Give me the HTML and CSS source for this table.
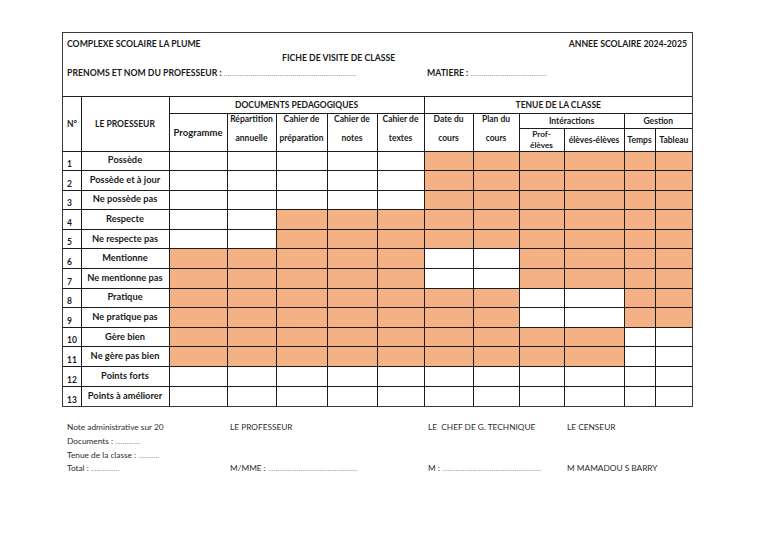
FILE: index.html
```html
<!DOCTYPE html>
<html lang="fr">
<head>
<meta charset="utf-8">
<title>Fiche de visite de classe</title>
<link rel="stylesheet" href="styles.css">
</head>
<body>
<div class="sheet">
  <div class="head">
    <div class="head-row">
      <span>COMPLEXE SCOLAIRE LA PLUME</span>
      <span>ANNEE SCOLAIRE 2024-2025</span>
    </div>
    <div class="title">FICHE DE VISITE DE CLASSE</div>
    <div class="head-row fields">
      <span class="prof">PRENOMS ET NOM DU PROFESSEUR : <span class="dots">.....................................................................</span></span>
      <span class="mat">MATIERE : <span class="dots">........................................</span></span>
    </div>
  </div>
  <table class="grid">
    <colgroup>
      <col class="c-n"><col class="c-lbl"><col class="c-prog"><col class="c-rep"><col class="c-prep"><col class="c-notes"><col class="c-txt"><col class="c-date"><col class="c-plan"><col class="c-pe"><col class="c-ee"><col class="c-tps"><col class="c-tab">
    </colgroup>
    <thead>
      <tr class="h-a">
        <th rowspan="3" class="n-head">N°</th>
        <th rowspan="3">LE PROESSEUR</th>
        <th colspan="5">DOCUMENTS PEDAGOGIQUES</th>
        <th colspan="6">TENUE DE LA CLASSE</th>
      </tr>
      <tr class="h-b">
        <th rowspan="2" class="big">Programme</th>
        <th rowspan="2" class="two"><span class="stack">Répartition<br>annuelle</span></th>
        <th rowspan="2" class="two"><span class="stack">Cahier de<br>préparation</span></th>
        <th rowspan="2" class="two"><span class="stack">Cahier de<br>notes</span></th>
        <th rowspan="2" class="two"><span class="stack">Cahier de<br>textes</span></th>
        <th rowspan="2" class="two"><span class="stack">Date du<br>cours</span></th>
        <th rowspan="2" class="two"><span class="stack">Plan du<br>cours</span></th>
        <th colspan="2">Intéractions</th>
        <th colspan="2">Gestion</th>
      </tr>
      <tr class="h-c">
        <th class="tight">Prof-<br>élèves</th>
        <th>élèves-élèves</th>
        <th>Temps</th>
        <th>Tableau</th>
      </tr>
    </thead>
    <tbody>
      <tr><td class="num">1</td><td class="lbl">Possède</td><td></td><td></td><td></td><td></td><td></td><td class="o"></td><td class="o"></td><td class="o"></td><td class="o"></td><td class="o"></td><td class="o"></td></tr>
      <tr><td class="num">2</td><td class="lbl">Possède et à jour</td><td></td><td></td><td></td><td></td><td></td><td class="o"></td><td class="o"></td><td class="o"></td><td class="o"></td><td class="o"></td><td class="o"></td></tr>
      <tr><td class="num">3</td><td class="lbl">Ne possède pas</td><td></td><td></td><td></td><td></td><td></td><td class="o"></td><td class="o"></td><td class="o"></td><td class="o"></td><td class="o"></td><td class="o"></td></tr>
      <tr><td class="num">4</td><td class="lbl">Respecte</td><td></td><td></td><td class="o"></td><td class="o"></td><td class="o"></td><td class="o"></td><td class="o"></td><td class="o"></td><td class="o"></td><td class="o"></td><td class="o"></td></tr>
      <tr><td class="num">5</td><td class="lbl">Ne respecte pas</td><td></td><td></td><td class="o"></td><td class="o"></td><td class="o"></td><td class="o"></td><td class="o"></td><td class="o"></td><td class="o"></td><td class="o"></td><td class="o"></td></tr>
      <tr><td class="num">6</td><td class="lbl">Mentionne</td><td class="o"></td><td class="o"></td><td class="o"></td><td class="o"></td><td class="o"></td><td></td><td></td><td class="o"></td><td class="o"></td><td class="o"></td><td class="o"></td></tr>
      <tr><td class="num">7</td><td class="lbl">Ne mentionne pas</td><td class="o"></td><td class="o"></td><td class="o"></td><td class="o"></td><td class="o"></td><td></td><td></td><td class="o"></td><td class="o"></td><td class="o"></td><td class="o"></td></tr>
      <tr><td class="num">8</td><td class="lbl">Pratique</td><td class="o"></td><td class="o"></td><td class="o"></td><td class="o"></td><td class="o"></td><td class="o"></td><td class="o"></td><td></td><td></td><td class="o"></td><td class="o"></td></tr>
      <tr><td class="num">9</td><td class="lbl">Ne pratique pas</td><td class="o"></td><td class="o"></td><td class="o"></td><td class="o"></td><td class="o"></td><td class="o"></td><td class="o"></td><td></td><td></td><td class="o"></td><td class="o"></td></tr>
      <tr><td class="num">10</td><td class="lbl">Gère bien</td><td class="o"></td><td class="o"></td><td class="o"></td><td class="o"></td><td class="o"></td><td class="o"></td><td class="o"></td><td class="o"></td><td class="o"></td><td></td><td></td></tr>
      <tr><td class="num">11</td><td class="lbl">Ne gère pas bien</td><td class="o"></td><td class="o"></td><td class="o"></td><td class="o"></td><td class="o"></td><td class="o"></td><td class="o"></td><td class="o"></td><td class="o"></td><td></td><td></td></tr>
      <tr><td class="num">12</td><td class="lbl">Points forts</td><td></td><td></td><td></td><td></td><td></td><td></td><td></td><td></td><td></td><td></td><td></td></tr>
      <tr><td class="num">13</td><td class="lbl">Points à améliorer</td><td></td><td></td><td></td><td></td><td></td><td></td><td></td><td></td><td></td><td></td><td></td></tr>
    </tbody>
  </table>
</div>
<div class="foot">
  <span class="f1">Note administrative sur 20</span>
  <span class="f2">Documents : <span class="dots">.............</span></span>
  <span class="f3">Tenue de la classe : <span class="dots">...........</span></span>
  <span class="f4">Total : <span class="dots">...............</span></span>
  <span class="p1">LE PROFESSEUR</span>
  <span class="p4">M/MME : <span class="dots">...............................................</span></span>
  <span class="c1">LE&nbsp; CHEF DE G. TECHNIQUE</span>
  <span class="c4">M : <span class="dots">....................................................</span></span>
  <span class="s1">LE CENSEUR</span>
  <span class="s4">M MAMADOU S BARRY</span>
</div>
</body>
</html>
```

FILE: styles.css
```css
html, body {
  margin: 0;
  padding: 0;
  background: #ffffff;
}

body {
  font-family: "Lato", "Open Sans", sans-serif;
  color: #1a1a1a;
}

.sheet {
  margin: 32px 0 0 62px;
  width: 631px;
  box-sizing: border-box;
  border: 1px solid #3a3a3a;
}

.head {
  height: 64px;
  box-sizing: border-box;
  border-bottom: 1px solid #222;
  padding: 4px 5px 0 4px;
  font-size: 8.7px;
  font-weight: 700;
}

.head-row {
  display: flex;
  justify-content: space-between;
  height: 13px;
  line-height: 13px;
}

.title {
  height: 16px;
  line-height: 16px;
  padding-left: 215px;
}

.fields {
  justify-content: flex-start;
}

.prof {
  width: 360px;
}

.dots {
  white-space: nowrap;
  font-weight: 400;
  font-size: 6px;
  letter-spacing: 0.5px;
}

.grid {
  width: 629px;
  table-layout: fixed;
  border-collapse: collapse;
  border-style: hidden;
  font-size: 8.6px;
}

.grid th,
.grid td {
  border: 1px solid #1c1c1c;
  padding: 0;
  text-align: center;
  vertical-align: middle;
  overflow: hidden;
  white-space: nowrap;
}

.grid th {
  font-weight: 700;
  font-size: 8.5px;
}

.c-n { width: 18px; }
.c-lbl { width: 88px; }
.c-prog { width: 58px; }
.c-rep { width: 49px; }
.c-prep { width: 51px; }
.c-notes { width: 50px; }
.c-txt { width: 47px; }
.c-date { width: 49px; }
.c-plan { width: 46px; }
.c-pe { width: 45px; }
.c-ee { width: 60px; }
.c-tps { width: 31px; }
.c-tab { width: 37px; }

.h-a { height: 16px; }
.h-b { height: 15px; }
.h-c { height: 23px; }

.grid th.big { font-size: 9.5px; }
.grid th.n-head { text-align: left; padding-left: 4px; }

.grid th.two {
  vertical-align: top;
}

.stack {
  display: block;
  line-height: 19px;
  margin-top: -4px;
}

.grid th.tight {
  line-height: 11px;
  font-size: 8.2px;
}

.grid tbody tr { height: 19.6px; }

.grid td.num {
  text-align: left;
  vertical-align: bottom;
  padding-left: 4px;
  padding-bottom: 1px;
  font-weight: 700;
  font-size: 8.5px;
}

.grid td.lbl {
  font-weight: 700;
  font-size: 9.3px;
  padding-bottom: 2px;
}

.grid td.o { background: #f4b183; }

.foot {
  display: grid;
  grid-template-columns: 163px 198px 139px auto;
  grid-template-rows: 14px 14px 13px 12px;
  margin: 14px 0 0 67px;
  font-size: 8.3px;
  line-height: 12px;
  color: #2c2c2c;
}

.f1 { grid-column: 1; grid-row: 1; }
.f2 { grid-column: 1; grid-row: 2; }
.f3 { grid-column: 1; grid-row: 3; }
.f4 { grid-column: 1; grid-row: 4; }
.p1 { grid-column: 2; grid-row: 1; }
.p4 { grid-column: 2; grid-row: 4; }
.c1 { grid-column: 3; grid-row: 1; }
.c4 { grid-column: 3; grid-row: 4; }
.s1 { grid-column: 4; grid-row: 1; }
.s4 { grid-column: 4; grid-row: 4; }
```
